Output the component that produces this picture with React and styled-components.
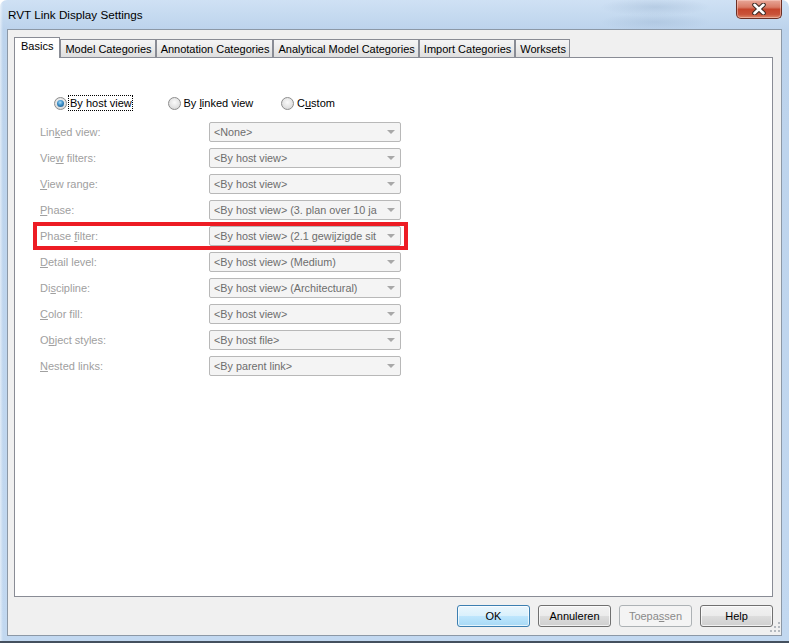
import styled, { createGlobalStyle } from "styled-components";

const Global = createGlobalStyle`
  html, body { margin: 0; padding: 0; background: #ffffff; }
  body { font-family: "Liberation Sans", Arial, sans-serif; }
`;

const radios = [
  { id: "host", label: ["By host view"], checked: true, focus: true },
  { id: "linked", label: ["By ", "l", "inked view"] },
  { id: "custom", label: ["C", "u", "stom"] },
];

const rows = [
  { label: ["Lin", "k", "ed view:"], value: "<None>" },
  { label: ["Vie", "w", " filters:"], value: "<By host view>" },
  { label: ["", "V", "iew range:"], value: "<By host view>" },
  { label: ["", "P", "hase:"], value: "<By host view> (3. plan over 10 ja" },
  { label: ["Phase ", "f", "ilter:"], value: "<By host view> (2.1 gewijzigde sit", marked: true },
  { label: ["", "D", "etail level:"], value: "<By host view> (Medium)" },
  { label: ["Di", "s", "cipline:"], value: "<By host view> (Architectural)" },
  { label: ["", "C", "olor fill:"], value: "<By host view>" },
  { label: ["O", "b", "ject styles:"], value: "<By host file>" },
  { label: ["", "N", "ested links:"], value: "<By parent link>" },
];

const tabs = [
  "Basics",
  "Model Categories",
  "Annotation Categories",
  "Analytical Model Categories",
  "Import Categories",
  "Worksets",
];

function Mnemonic({ parts }) {
  if (parts.length === 1) return parts[0];
  return (
    <>
      {parts[0]}
      <Key>{parts[1]}</Key>
      {parts[2]}
    </>
  );
}

export default function App() {
  return (
    <>
      <Global />
      <Window>
        <TitleBar>
          <Title>RVT Link Display Settings</Title>
          <CloseButton>
            <svg width="16" height="12" viewBox="0 0 16 12">
              <path
                d="M3.5 1.8 L12.5 10.2 M12.5 1.8 L3.5 10.2"
                stroke="#3b2a24"
                strokeWidth="4.6"
                strokeLinecap="round"
              />
              <path
                d="M3.5 1.8 L12.5 10.2 M12.5 1.8 L3.5 10.2"
                stroke="#ffffff"
                strokeWidth="2.6"
                strokeLinecap="round"
              />
            </svg>
          </CloseButton>
        </TitleBar>
        <Client>
          <TabStrip>
            {tabs.map((t, i) => (
              <Tab key={t} $active={i === 0}>
                {t}
              </Tab>
            ))}
          </TabStrip>
          <Panel>
            <RadioRow>
              {radios.map((r) => (
                <RadioItem key={r.id}>
                  <RadioDot $checked={r.checked} />
                  <RadioLabel $focus={r.focus}>
                    <Mnemonic parts={r.label} />
                  </RadioLabel>
                </RadioItem>
              ))}
            </RadioRow>
            <Form>
              {rows.map((r) => (
                <Row key={r.label.join("")}>
                  {r.marked && <Highlight />}
                  <FieldLabel>
                    <Mnemonic parts={r.label} />
                  </FieldLabel>
                  <Combo>
                    <ComboText>{r.value}</ComboText>
                    <Arrow />
                  </Combo>
                </Row>
              ))}
            </Form>
          </Panel>
          <ButtonRow>
            <Button $default>OK</Button>
            <Button>Annuleren</Button>
            <Button $disabled>
              Toepa<Key>s</Key>sen
            </Button>
            <Button>Help</Button>
          </ButtonRow>
          <Grip>
            <svg width="10" height="10" viewBox="0 0 10 10">
              {[
                [8, 0],
                [8, 4],
                [4, 4],
                [8, 8],
                [4, 8],
                [0, 8],
              ].map(([x, y]) => (
                <rect key={x + "-" + y} x={x} y={y} width="2" height="2" fill="#b4b9bf" />
              ))}
            </svg>
          </Grip>
        </Client>
      </Window>
    </>
  );
}

const Window = styled.div`
  width: 789px;
  height: 643px;
  box-sizing: border-box;
  display: flex;
  flex-direction: column;
  border-radius: 7px 7px 0 0;
  border-bottom: 2px solid #44505e;
  background:
    linear-gradient(90deg, rgba(255, 255, 255, 0.55) 0, rgba(255, 255, 255, 0) 3px),
    radial-gradient(ellipse 55px 9px at 655px 7px, rgba(130, 158, 190, 0.28), transparent),
    radial-gradient(ellipse 55px 9px at 655px 22px, rgba(130, 158, 190, 0.24), transparent),
    linear-gradient(180deg, #cfe1f4 0, #bcd3ec 30px, #c2d8f0 100%);
  overflow: hidden;
`;

const TitleBar = styled.div`
  height: 29px;
  flex: none;
  display: flex;
  justify-content: space-between;
  align-items: flex-start;
  padding-left: 8px;
`;

const Title = styled.div`
  font-family: "Liberation Sans", Arial, sans-serif;
  font-size: 11.7px;
  color: #000000;
  line-height: 30px;
`;

const CloseButton = styled.div`
  width: 46px;
  height: 19px;
  margin-right: 7px;
  box-sizing: border-box;
  border: 1px solid #6b2f25;
  border-top: none;
  border-radius: 0 0 5px 5px;
  background: linear-gradient(
    180deg,
    #e8a798 0,
    #d97b66 40%,
    #c5452c 52%,
    #c9533a 80%,
    #dd8a6c 100%
  );
  box-shadow: inset 0 0 0 1px rgba(255, 220, 210, 0.45);
  display: flex;
  align-items: center;
  justify-content: center;
`;

const Client = styled.div`
  position: relative;
  flex: 1;
  margin: 0 7px 5px 7px;
  background: #f0f0f0;
  border: 1px solid #8c98a6;
  display: flex;
  flex-direction: column;
  padding: 7px 8px 8px 6px;
`;

const TabStrip = styled.div`
  display: flex;
  align-items: flex-end;
  height: 21px;
  margin-bottom: -1px;
  position: relative;
  z-index: 1;
`;

const Tab = styled.div`
  box-sizing: border-box;
  height: ${(p) => (p.$active ? "21px" : "19px")};
  padding: ${(p) => (p.$active ? "0 6px" : "0 3px 0 4px")};
  border: 1px solid #898c95;
  border-bottom: ${(p) => (p.$active ? "none" : "1px solid #898c95")};
  background: ${(p) =>
    p.$active ? "#ffffff" : "linear-gradient(180deg, #f5f5f5 0, #ebebeb 50%, #dedede 100%)"};
  font-size: 11px;
  color: #000000;
  line-height: ${(p) => (p.$active ? "17px" : "18px")};
  white-space: nowrap;
`;

const Panel = styled.div`
  flex: 1;
  background: #ffffff;
  border: 1px solid #898c95;
  padding: 37px 0 0 25px;
`;

const RadioRow = styled.div`
  display: flex;
  align-items: center;
  height: 16px;
  margin-left: 14px;
  margin-bottom: 11px;
`;

const RadioItem = styled.div`
  width: 113.5px;
  display: flex;
  align-items: center;
`;

const RadioDot = styled.span`
  width: 13px;
  height: 13px;
  box-sizing: border-box;
  border-radius: 50%;
  border: 1px solid #8d8d8d;
  background: radial-gradient(circle at 50% 40%, #fafafa 0, #e4e4e4 55%, #cfcfcf 100%);
  display: flex;
  align-items: center;
  justify-content: center;
  margin-right: 1px;
  &::after {
    content: "";
    display: ${(p) => (p.$checked ? "block" : "none")};
    width: 7px;
    height: 7px;
    border-radius: 50%;
    background: radial-gradient(circle at 45% 35%, #a8dcf8 0, #3d8fc8 45%, #134a78 100%);
  }
`;

const RadioLabel = styled.span`
  font-size: 11px;
  color: #000000;
  line-height: 14px;
  padding: 0 0 0 1px;
  border: 1px dotted ${(p) => (p.$focus ? "#000000" : "transparent")};
`;

const Key = styled.span`
  text-decoration: underline;
  text-underline-offset: 1px;
`;

const Form = styled.div`
  display: flex;
  flex-direction: column;
  gap: 6px;
`;

const Row = styled.div`
  position: relative;
  display: grid;
  grid-template-columns: 169px 192px;
  align-items: center;
  height: 20px;
`;

const Highlight = styled.div`
  position: absolute;
  left: -7px;
  top: -4px;
  width: 375px;
  height: 28px;
  box-sizing: border-box;
  border: 4px solid #ed1c24;
  pointer-events: none;
`;

const FieldLabel = styled.div`
  font-size: 11px;
  color: #a0a0a0;
  white-space: nowrap;
  position: relative;
`;

const Combo = styled.div`
  position: relative;
  box-sizing: border-box;
  height: 20px;
  border: 1px solid #b8b8b8;
  border-radius: 2px;
  background: #f4f4f4;
  display: flex;
  align-items: center;
  padding-left: 4px;
`;

const ComboText = styled.span`
  width: 172px;
  overflow: hidden;
  white-space: nowrap;
  font-size: 10.8px;
  color: #6d6d6d;
`;

const Arrow = styled.span`
  margin-left: auto;
  margin-right: 5px;
  width: 0;
  height: 0;
  border-left: 4px solid transparent;
  border-right: 4px solid transparent;
  border-top: 4px solid #a8a8a8;
`;

const ButtonRow = styled.div`
  display: flex;
  justify-content: flex-end;
  margin-top: 8px;
  gap: 8px;
`;

const Button = styled.div`
  box-sizing: border-box;
  width: 73px;
  height: 22px;
  border-radius: 3px;
  font-size: 11px;
  line-height: 20px;
  text-align: center;
  color: ${(p) => (p.$disabled ? "#8a8a8a" : "#000000")};
  border: 1px solid
    ${(p) => (p.$default ? "#3c7fb1" : p.$disabled ? "#adb2b5" : "#707070")};
  background: ${(p) =>
    p.$default
      ? "linear-gradient(180deg, #eaf6fd 0, #d9f0fc 50%, #bee6fd 51%, #a7d9f5 100%)"
      : p.$disabled
      ? "#f4f4f4"
      : "linear-gradient(180deg, #f2f2f2 0, #ebebeb 50%, #dddddd 51%, #cfcfcf 100%)"};
  box-shadow: inset 0 0 0 1px
    ${(p) => (p.$disabled ? "transparent" : "rgba(255, 255, 255, 0.7)")};
`;

const Grip = styled.div`
  position: absolute;
  right: 1px;
  bottom: 3px;
  width: 10px;
  height: 10px;
  display: flex;
`;
